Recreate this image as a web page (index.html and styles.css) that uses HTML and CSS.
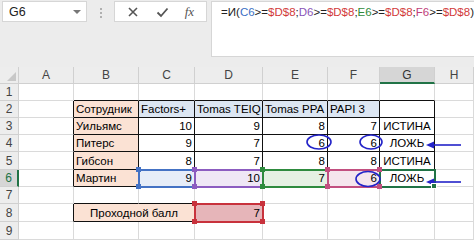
FILE: index.html
```html
<!DOCTYPE html>
<html lang="ru">
  <head>
    <meta charset="UTF-8" />
    <title>Проходной балл</title>
    <link rel="stylesheet" href="styles.css">
  </head>
  <body>
    <div class="toolbar">
      <div class="namebox">
        <span>G6</span>
        <span class="caret"></span>
      </div>
      <div class="dots"><i></i><i></i><i></i></div>
      <div class="fxbox">
        <svg width="12" height="12" viewBox="0 0 12 12"><path d="M2 2 L10 10 M10 2 L2 10" stroke="#555" stroke-width="1.6" fill="none" /></svg>
        <svg width="13" height="12" viewBox="0 0 13 12"><path d="M1.5 6.5 L5 10 L11.5 2.5" stroke="#555" stroke-width="1.8" fill="none" /></svg>
        <span class="fx">fx</span>
      </div>
      <div class="formula">=И(<b class="c-blue">C6</b>&gt;=<b class="c-red">$D$8</b>;<b class="c-purple">D6</b>&gt;=<b class="c-red">$D$8</b>;<b class="c-green">E6</b>&gt;=<b class="c-red">$D$8</b>;<b class="c-pink">F6</b>&gt;=<b class="c-red">$D$8</b>)</div>
    </div>

    <div class="sheet">
      <!-- header -->
      <div class="ch corner"><span class="tri"></span></div>
      <div class="ch">A</div>
      <div class="ch">B</div>
      <div class="ch">C</div>
      <div class="ch">D</div>
      <div class="ch">E</div>
      <div class="ch">F</div>
      <div class="ch active-col">G</div>
      <div class="ch">H</div>

      <!-- 1 -->
      <div class="rh">1</div>
      <div class="c"></div>
      <div class="c tt"></div>
      <div class="c tt"></div>
      <div class="c tt"></div>
      <div class="c tt"></div>
      <div class="c tt"></div>
      <div class="c tt"></div>
      <div class="c"></div>

      <!-- 2 -->
      <div class="rh">2</div>
      <div class="c tl"></div>
      <div class="c t peach">Сотрудник</div>
      <div class="c t blue">Factors+</div>
      <div class="c t blue">Tomas TEIQ</div>
      <div class="c t blue">Tomas PPA</div>
      <div class="c t blue">PAPI 3</div>
      <div class="c t"></div>
      <div class="c"></div>

      <!-- 3 -->
      <div class="rh">3</div>
      <div class="c tl"></div>
      <div class="c t peach">Уильямс</div>
      <div class="c t num">10</div>
      <div class="c t num">9</div>
      <div class="c t num">8</div>
      <div class="c t num">7</div>
      <div class="c t mid">ИСТИНА</div>
      <div class="c"></div>

      <!-- 4 -->
      <div class="rh">4</div>
      <div class="c tl"></div>
      <div class="c t peach">Питерс</div>
      <div class="c t num">9</div>
      <div class="c t num">7</div>
      <div class="c t num">6</div>
      <div class="c t num">6</div>
      <div class="c t mid">ЛОЖЬ</div>
      <div class="c"></div>

      <!-- 5 -->
      <div class="rh">5</div>
      <div class="c tl"></div>
      <div class="c t peach">Гибсон</div>
      <div class="c t num">8</div>
      <div class="c t num">7</div>
      <div class="c t num">8</div>
      <div class="c t num">8</div>
      <div class="c t mid">ИСТИНА</div>
      <div class="c"></div>

      <!-- 6 -->
      <div class="rh active-row">6</div>
      <div class="c tl"></div>
      <div class="c t peach">Мартин</div>
      <div class="c t num ref ref-blue">9<i class="h h1"></i><i class="h h2"></i><i class="h h3"></i><i class="h h4"></i></div>
      <div class="c t num ref ref-purple">10<i class="h h1"></i><i class="h h2"></i><i class="h h3"></i><i class="h h4"></i></div>
      <div class="c t num ref ref-green">7<i class="h h1"></i><i class="h h2"></i><i class="h h3"></i><i class="h h4"></i></div>
      <div class="c t num ref ref-pink">6<i class="h h1"></i><i class="h h2"></i><i class="h h3"></i><i class="h h4"></i></div>
      <div class="c t mid ref active">ЛОЖЬ<i class="h h4"></i></div>
      <div class="c"></div>

      <!-- 7 -->
      <div class="rh">7</div>
      <div class="c"></div>
      <div class="c tt"></div>
      <div class="c tt"></div>
      <div class="c"></div>
      <div class="c"></div>
      <div class="c"></div>
      <div class="c"></div>
      <div class="c"></div>

      <!-- 8 -->
      <div class="rh">8</div>
      <div class="c tl"></div>
      <div class="c t peach mid span2">Проходной балл</div>
      <div class="c num ref ref-red">7<i class="h h1"></i><i class="h h2"></i><i class="h h3"></i><i class="h h4"></i></div>
      <div class="c"></div>
      <div class="c"></div>
      <div class="c"></div>
      <div class="c"></div>

      <!-- 9 -->
      <div class="rh">9</div>
      <div class="c"></div>
      <div class="c"></div>
      <div class="c"></div>
      <div class="c"></div>
      <div class="c"></div>
      <div class="c"></div>
      <div class="c"></div>
      <div class="c"></div>
    </div>

    <svg class="marks" width="474" height="241" viewBox="0 0 474 241">
      <g fill="none" stroke="#2323c8" stroke-width="1.6">
        <ellipse cx="319" cy="142" rx="12" ry="7" />
        <ellipse cx="371" cy="142" rx="11" ry="7" />
        <ellipse cx="368" cy="179" rx="12" ry="7.5" />
        <path d="M432 145 H461" />
        <path d="M432 182 H461" />
      </g>
      <g fill="#2323c8">
        <path d="M426 145 L434 141.5 L434 148.5 Z" />
        <path d="M426 182 L434 178.5 L434 185.5 Z" />
      </g>
    </svg>
  </body>
</html>
```

FILE: styles.css
```css
* {
  box-sizing: border-box;
}

body {
  margin: 0;
  position: relative;
  width: 474px;
  height: 241px;
  overflow: hidden;
  background: #fff;
  font-family: "Liberation Sans", Arial, sans-serif;
  font-size: 12px;
  color: #000;
}

/* Formula toolbar */
.toolbar {
  display: flex;
  align-items: flex-start;
  height: 67px;
  padding-top: 1px;
  background: #ececec;
}

.namebox {
  display: flex;
  align-items: center;
  justify-content: space-between;
  width: 86px;
  height: 21px;
  margin-left: 2px;
  padding: 0 5px 0 6px;
  background: #fff;
  border: 1px solid #d6d6d6;
  font-size: 12.5px;
  color: #222;
}

.caret {
  width: 0;
  height: 0;
  border-left: 4px solid transparent;
  border-right: 4px solid transparent;
  border-top: 4px solid #777;
}

.dots {
  display: flex;
  flex-direction: column;
  align-items: center;
  gap: 2px;
  width: 28px;
  padding-top: 7px;
}

.dots i {
  width: 2px;
  height: 2px;
  background: #b0b0b0;
}

.fxbox {
  display: flex;
  align-items: center;
  justify-content: space-around;
  width: 94px;
  height: 21px;
  padding: 0 4px;
  background: #fff;
  border: 1px solid #d6d6d6;
}

.fx {
  font-family: "Liberation Serif", serif;
  font-style: italic;
  font-size: 13px;
  color: #555;
}

.formula {
  flex: 1;
  height: 56px;
  margin-left: 4px;
  padding: 4px 0 0 9px;
  background: #fff;
  border: 1px solid #d6d6d6;
  border-right: 0;
  font-size: 11.5px;
  color: #222;
  white-space: nowrap;
}

.formula b {
  font-weight: normal;
}

.c-blue { color: #3b6fc4; }
.c-red { color: #d23a3a; }
.c-purple { color: #8a55b8; }
.c-green { color: #2f8a3a; }
.c-pink { color: #c0407a; }

/* Sheet */
.sheet {
  display: grid;
  grid-template-columns: 19px 55px 65px 56px 68px 65px 52px 55px 1fr;
  grid-template-rows: 17px 17px 17px 17px 17px 18px 17px 17px 18px 18px;
  font-size: 11.5px;
}

.ch,
.rh {
  display: flex;
  align-items: center;
  justify-content: center;
  background: #ededed;
  border-right: 1px solid #d0d0d0;
  border-bottom: 1px solid #d0d0d0;
  color: #444;
  font-size: 12px;
}

.corner {
  position: relative;
}

.tri {
  position: absolute;
  right: 2px;
  bottom: 2px;
  width: 0;
  height: 0;
  border-left: 9px solid transparent;
  border-bottom: 9px solid #c8c8c8;
}

.active-col {
  background: #d6d6d6;
  border-bottom: 2px solid #217346;
  color: #333;
}

.active-row {
  background: #d6d6d6;
  border-right: 2px solid #217346;
  color: #217346;
}

.c {
  display: flex;
  align-items: center;
  padding: 0 2px;
  border-right: 1px solid #dadada;
  border-bottom: 1px solid #dadada;
  white-space: nowrap;
  overflow: visible;
}

.t {
  border-right-color: #111;
  border-bottom-color: #111;
}

.tl {
  border-right-color: #111;
}

.tt {
  border-bottom-color: #111;
}

.peach {
  background: #fbe2d4;
}

.blue {
  background: #dce6f2;
}

.num {
  justify-content: flex-end;
  padding-right: 2px;
}

.mid {
  justify-content: center;
}

.span2 {
  grid-column: span 2;
}

/* Formula reference highlights */
.ref {
  position: relative;
  outline: 2px solid;
  outline-offset: -1px;
}

.ref-blue {
  background: #e6edf8;
  outline-color: #4472c4;
  color: #000;
}

.ref-purple {
  background: #efe7f5;
  outline-color: #8c5cc0;
}

.ref-green {
  background: #e5f1e3;
  outline-color: #2e8b3e;
}

.ref-pink {
  background: #f5e5ed;
  outline-color: #c24f80;
}

.ref-red {
  background: #e6b5b9;
  outline-color: #c8323c;
}

.active {
  outline-color: #217346;
}

.h {
  position: absolute;
  width: 5px;
  height: 5px;
  z-index: 2;
}

.ref-blue .h { background: #4472c4; }
.ref-purple .h { background: #8c5cc0; }
.ref-green .h { background: #2e8b3e; }
.ref-pink .h { background: #c24f80; }
.ref-red .h { background: #c8323c; }
.active .h { background: #217346; border: 1px solid #fff; width: 6px; height: 6px; }

.h1 { left: -3px; top: -3px; }
.h2 { right: -3px; top: -3px; }
.h3 { left: -3px; bottom: -3px; }
.h4 { right: -3px; bottom: -3px; }

/* Hand-drawn annotations */
.marks {
  position: absolute;
  left: 0;
  top: 0;
  pointer-events: none;
}
```
